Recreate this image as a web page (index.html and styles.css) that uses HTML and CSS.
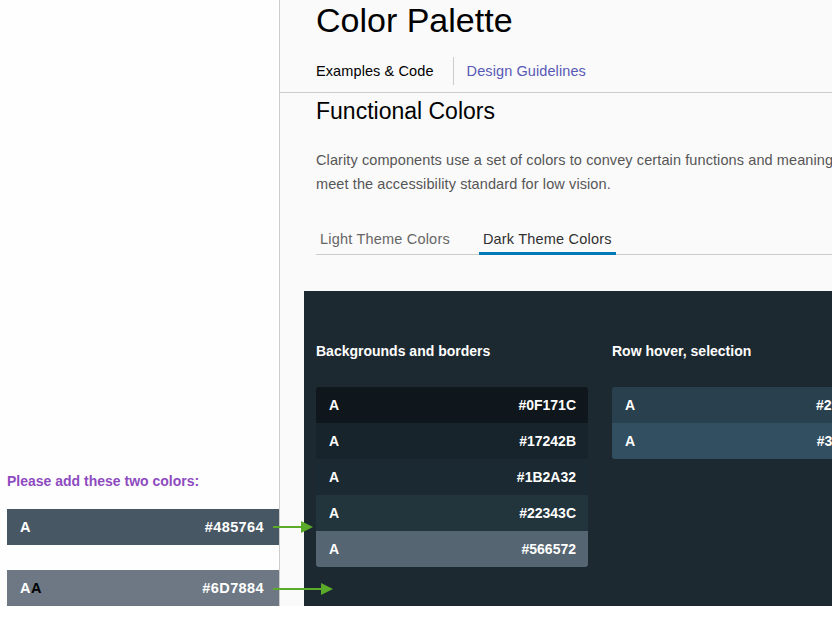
FILE: index.html
```html
<!DOCTYPE html>
<html lang="en">
<head>
<meta charset="utf-8">
<title>Color Palette</title>
<link rel="stylesheet" href="styles.css">
</head>
<body>
<div class="page">
  <aside class="side">
    <p class="note">Please add these two colors:</p>
    <div class="add-swatch sw-a"><span>A</span><span>#485764</span></div>
    <div class="add-swatch sw-b"><span>A<b class="dark-a">A</b></span><span>#6D7884</span></div>
  </aside>
  <main class="main">
    <header class="header">
      <h1 class="title">Color Palette</h1>
      <nav class="nav">
        <span class="nav-item">Examples &amp; Code</span>
        <span class="nav-item nav-link">Design Guidelines</span>
      </nav>
    </header>
    <section class="content">
      <h2 class="subtitle">Functional Colors</h2>
      <p class="intro">Clarity components use a set of colors to convey certain functions and meanings. These colors<br>meet the accessibility standard for low vision.</p>
      <div class="tabs">
        <span class="tab">Light Theme Colors</span>
        <span class="tab tab-active">Dark Theme Colors</span>
      </div>
      <div class="panel">
        <div class="col">
          <h3 class="col-title">Backgrounds and borders</h3>
          <div class="swatches">
            <div class="row c1"><span>A</span><span>#0F171C</span></div>
            <div class="row c2"><span>A</span><span>#17242B</span></div>
            <div class="row c3"><span>A</span><span>#1B2A32</span></div>
            <div class="row c4"><span>A</span><span>#22343C</span></div>
            <div class="row c5"><span>A</span><span>#566572</span></div>
          </div>
        </div>
        <div class="col">
          <h3 class="col-title">Row hover, selection</h3>
          <div class="swatches">
            <div class="row c6"><span>A</span><span>#29414E</span></div>
            <div class="row c7"><span>A</span><span>#324F61</span></div>
          </div>
        </div>
      </div>
    </section>
  </main>
  <svg class="arrow arrow-1" width="44" height="16" viewBox="0 0 44 16">
    <line x1="0" y1="8" x2="30" y2="8" stroke="#5aab29" stroke-width="2"/>
    <polygon points="28,2 40,8 28,14" fill="#5aab29"/>
  </svg>
  <svg class="arrow arrow-2" width="64" height="16" viewBox="0 0 64 16">
    <line x1="0" y1="8" x2="50" y2="8" stroke="#5aab29" stroke-width="2"/>
    <polygon points="48,2 60,8 48,14" fill="#5aab29"/>
  </svg>
</div>
</body>
</html>
```
FILE: styles.css
```css
html, body {
  margin: 0;
  padding: 0;
  background: #ffffff;
  overflow: hidden;
}
body {
  font-family: "Liberation Sans", Arial, sans-serif;
  color: #000;
}
.page {
  position: relative;
  display: flex;
  width: 832px;
  height: 606px;
}
.side {
  width: 272px;
  flex-shrink: 0;
  padding-left: 7px;
  border-right: 1px solid #cccccc;
  background: #fefefe;
  display: flex;
  flex-direction: column;
  justify-content: flex-end;
}
.note {
  margin: 0 0 18px;
  font-size: 14px;
  line-height: 20px;
  font-weight: bold;
  color: #8e4bc0;
}
.add-swatch {
  height: 36px;
  display: flex;
  justify-content: space-between;
  align-items: center;
  padding: 0 15px 0 13px;
  color: #fff;
  font-weight: bold;
  font-size: 14.5px;
  letter-spacing: 0.4px;
}
.sw-a {
  background: #485764;
  margin-bottom: 25px;
}
.sw-b {
  background: #6d7884;
}
.dark-a {
  color: #000;
}
.main {
  flex: 1;
  min-width: 0;
  background: #fafafa;
  overflow: hidden;
}
.header {
  border-bottom: 1px solid #cccccc;
  padding: 0 0 7px 36px;
}
.title {
  margin: 0;
  font-size: 34px;
  line-height: 40px;
  font-weight: normal;
  color: #000;
}
.nav {
  display: flex;
  margin-top: 17px;
  height: 28px;
  align-items: center;
  font-size: 14.5px;
  letter-spacing: 0.1px;
}
.nav-item {
  padding-right: 19px;
  color: #000;
  line-height: 28px;
}
.nav-link {
  padding-left: 13px;
  border-left: 1px solid #cccccc;
  color: #5759b6;
}
.content {
  padding-left: 36px;
}
.subtitle {
  margin: 4px 0 0;
  font-size: 23px;
  line-height: 28px;
  font-weight: normal;
  color: #000;
}
.intro {
  margin: 23px 0 0;
  font-size: 14.5px;
  letter-spacing: 0.1px;
  line-height: 24px;
  color: #565656;
  white-space: nowrap;
}
.tabs {
  display: flex;
  gap: 25px;
  margin-top: 28px;
  border-bottom: 1px solid #cccccc;
  width: 1000px;
}
.tab {
  padding: 2px 4px 0;
  line-height: 26px;
  font-size: 14.5px;
  letter-spacing: 0.2px;
  color: #666666;
  border-bottom: 3px solid transparent;
  margin-bottom: -1px;
}
.tab-active {
  color: #313131;
  border-bottom-color: #0079b8;
}
.panel {
  margin: 36px 0 0 -12px;
  padding: 50px 0 40px 12px;
  background: #1d2930;
  display: flex;
  gap: 24px;
  width: 1000px;
}
.col {
  width: 272px;
  flex-shrink: 0;
}
.col-title {
  margin: 0 0 26px;
  font-size: 14px;
  line-height: 20px;
  font-weight: bold;
  color: #fff;
}
.swatches {
  border-radius: 3px;
  overflow: hidden;
}
.row {
  height: 36px;
  display: flex;
  justify-content: space-between;
  align-items: center;
  padding: 0 12px 0 13px;
  color: #fff;
  font-size: 14px;
  font-weight: bold;
}
.c1 { background: #0f171c; }
.c2 { background: #17242b; }
.c3 { background: #1b2a32; }
.c4 { background: #22343c; }
.c5 { background: #566572; }
.c6 { background: #29414e; }
.c7 { background: #324f61; }
.arrow {
  position: absolute;
}
.arrow-1 {
  left: 273px;
  top: 519px;
}
.arrow-2 {
  left: 273px;
  top: 581px;
}
```
